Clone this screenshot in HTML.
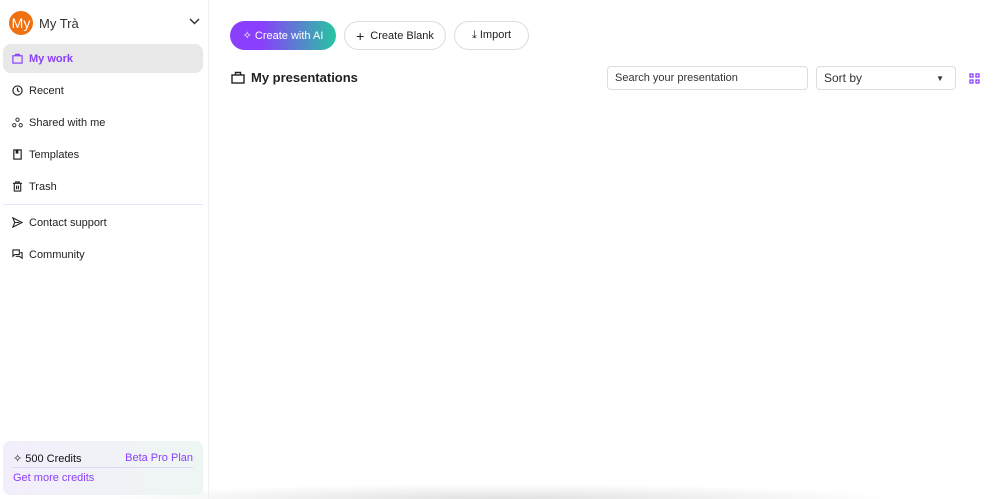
<!DOCTYPE html>
<html><head><style>
*{box-sizing:border-box;margin:0;padding:0}
html,body{width:1000px;height:499px;overflow:hidden}
body{background:#fff;font-family:"Liberation Sans",sans-serif;color:#222;position:relative}
.side{position:absolute;left:0;top:0;width:209px;height:499px;border-right:1px solid #f0f0f0;z-index:2}
.av{position:absolute;left:9px;top:11px;width:24px;height:24px;border-radius:50%;background:#f07010;color:#fff;font-size:14px;line-height:24px;text-align:center}
.name{position:absolute;left:39px;top:16px;font-size:13px;color:#333}
.chev{position:absolute;left:189px;top:17px}
.item{position:absolute;left:3px;width:200px;height:29px;border-radius:8px;font-size:11px;display:flex;align-items:center;padding-left:9px;gap:6px;color:#222}
.item svg{width:11px;height:11px}
.act{background:#e8e8e8;color:#8a3ffc;font-weight:bold}
.hr{position:absolute;left:3px;top:204px;width:200px;height:1px;background:#e6e4f7}
.cred{position:absolute;left:3px;top:441px;width:200px;height:54px;border-radius:7px;background:linear-gradient(90deg,#f3eefc,#eef6f3)}
.btn{position:absolute;top:21px;height:29px;border-radius:15px;border:1px solid #ddd;font-size:11px;display:flex;align-items:center;justify-content:center;gap:6px;color:#222}
.inp{position:absolute;top:66px;height:24px;border:1px solid #ddd;border-radius:4px;font-size:11px;display:flex;align-items:center;padding-left:7px;color:#333}
</style></head><body>
<div style="position:absolute;left:100px;top:484px;width:800px;height:15px;background:radial-gradient(ellipse at 50% 100%,#e0e0e0,#fff 70%);z-index:1"></div>
<div class="side">
<div class="av">My</div><div class="name">My Trà</div>
<svg class="chev" width="11" height="8" viewBox="0 0 11 8"><path d="M1 2l4.5 4.5L10 2" stroke="#333" stroke-width="1.5" fill="none"/></svg>
<div class="item act" style="top:44px"><svg viewBox="0 0 12 12"><rect x="1" y="3" width="10" height="8" fill="none" stroke="#8a3ffc" stroke-width="1.3"/><path d="M4 3V1.5h4V3" fill="none" stroke="#8a3ffc" stroke-width="1.3"/></svg>My work</div>
<div class="item" style="top:76px"><svg viewBox="0 0 12 12"><circle cx="6" cy="6" r="5" fill="none" stroke="#222" stroke-width="1.3"/><path d="M6 3v3l2 1.5" fill="none" stroke="#222" stroke-width="1.3"/></svg>Recent</div>
<div class="item" style="top:108px"><svg viewBox="0 0 12 12"><circle cx="6" cy="3" r="1.8" fill="none" stroke="#222"/><circle cx="2.5" cy="9" r="1.8" fill="none" stroke="#222"/><circle cx="9.5" cy="9" r="1.8" fill="none" stroke="#222"/></svg>Shared with me</div>
<div class="item" style="top:140px"><svg viewBox="0 0 12 12"><rect x="2" y="1" width="8" height="10" fill="none" stroke="#222" stroke-width="1.3"/><rect x="4" y="1" width="3" height="4" fill="#222"/></svg>Templates</div>
<div class="item" style="top:172px"><svg viewBox="0 0 12 12"><path d="M1 2.5h10M4 2.5V1h4v1.5M2.5 2.5v8.5h7V2.5M5 5v4M7 5v4" fill="none" stroke="#222" stroke-width="1.2"/></svg>Trash</div>
<div class="hr"></div>
<div class="item" style="top:208px"><svg viewBox="0 0 12 12"><path d="M1 1l10 5-10 5 2-5zM3 6h5" fill="none" stroke="#222" stroke-width="1.2"/></svg>Contact support</div>
<div class="item" style="top:240px"><svg viewBox="0 0 12 12"><path d="M1 1h7v5H3L1 8zM4 8h4l3 2V4H9" fill="none" stroke="#222" stroke-width="1.2"/></svg>Community</div>
<div class="cred">
<div style="position:absolute;left:10px;top:11px;font-size:11px;color:#111">✧ 500 Credits</div>
<div style="position:absolute;right:10px;top:11px;font-size:11px;color:#8a3ffc">Beta Pro Plan</div>
<div style="position:absolute;left:10px;right:10px;top:26px;height:1px;background:#dcdaf5"></div>
<div style="position:absolute;left:10px;top:31px;font-size:11px;color:#8a3ffc">Get more credits</div>
</div>
</div>
<div class="btn" style="left:230px;width:106px;border:none;background:linear-gradient(90deg,#8a3ffc 30%,#26c6a0);color:#fff">✧ Create with AI</div>
<div class="btn" style="left:344px;width:102px"><span style="font-size:14px">+</span> Create Blank</div>
<div class="btn" style="left:454px;width:75px">⤓ Import</div>
<svg style="position:absolute;left:231px;top:71px" width="14" height="13" viewBox="0 0 14 13"><rect x="1" y="4" width="12" height="8" fill="none" stroke="#222" stroke-width="1.4"/><path d="M4.5 4V1.5h5V4" fill="none" stroke="#222" stroke-width="1.4"/></svg>
<div style="position:absolute;left:251px;top:70px;font-size:13px;font-weight:bold;color:#222">My presentations</div>
<div class="inp" style="left:607px;width:201px">Search your presentation</div>
<div class="inp" style="left:816px;width:140px;font-size:12px">Sort by<span style="position:absolute;right:11px;font-size:8px">▼</span></div>
<svg style="position:absolute;left:969px;top:73px" width="11" height="11" viewBox="0 0 11 11" fill="none" stroke="#8a3ffc" stroke-width="1.3"><rect x="1" y="1" width="3" height="3"/><rect x="7" y="1" width="3" height="3"/><rect x="1" y="7" width="3" height="3"/><rect x="7" y="7" width="3" height="3"/></svg>
</body></html>
